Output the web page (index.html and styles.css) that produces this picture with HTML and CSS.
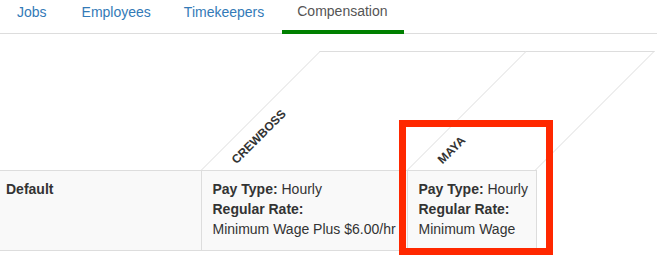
FILE: index.html
```html
<!DOCTYPE html>
<html>
<head>
<meta charset="utf-8">
<link rel="stylesheet" href="styles.css">
</head>
<body>
<ul class="tabs">
  <li class="first"><a href="#">Jobs</a></li>
  <li><a href="#">Employees</a></li>
  <li><a href="#">Timekeepers</a></li>
  <li class="active"><a href="#">Compensation</a></li>
</ul>
<table class="grid">
  <colgroup>
    <col class="c1">
    <col class="c2">
    <col class="c3">
  </colgroup>
  <thead>
    <tr>
      <th></th>
      <th><div class="head"><span class="label">CREWBOSS</span></div></th>
      <th><div class="head last"><span class="label">MAYA</span></div></th>
    </tr>
  </thead>
  <tbody>
    <tr>
      <td class="name">Default</td>
      <td><b>Pay Type:</b> Hourly<br><b>Regular Rate:</b><br>Minimum Wage Plus $6.00/hr</td>
      <td><b>Pay Type:</b> Hourly<br><b>Regular Rate:</b><br>Minimum Wage</td>
    </tr>
  </tbody>
</table>
<div class="highlight"></div>
</body>
</html>
```
FILE: styles.css
```css
html, body {
  margin: 0;
  padding: 0;
  background: #fff;
  font-family: "Liberation Sans", Arial, sans-serif;
  color: #333;
}

.tabs {
  display: flex;
  gap: 3px;
  list-style: none;
  margin: 0;
  padding: 0 0 0 2px;
  border-bottom: 1px solid #ddd;
}

.tabs .first {
  margin-right: 2px;
}

.tabs a {
  display: block;
  padding: 2px 15px 8px;
  line-height: 20px;
  font-size: 14px;
  color: #337ab7;
  text-decoration: none;
  border-bottom: 4px solid transparent;
  margin-bottom: -1px;
}

.tabs .active a {
  color: #555;
  padding: 1px 16px 9px 15px;
  border-bottom-color: #008000;
}

.grid {
  border-collapse: collapse;
  table-layout: fixed;
  width: 536px;
}

.c1 { width: 201px; }
.c2 { width: 206px; }
.c3 { width: 129px; }

.grid th {
  height: 136px;
  padding: 0;
  vertical-align: bottom;
  text-align: left;
}

.head {
  position: relative;
  height: 119px;
  box-sizing: border-box;
  display: flex;
  align-items: flex-end;
  padding: 0 0 4px 37px;
}

.head::before {
  content: "";
  position: absolute;
  inset: 0;
  border-top: 1px solid #ddd;
  border-left: 1px solid #ddd;
  transform: skewX(-45deg);
  transform-origin: 0 100%;
}

.head.last::before {
  border-right: 1px solid #ddd;
}

.label {
  display: inline-block;
  font-size: 12px;
  font-weight: bold;
  line-height: 12px;
  white-space: nowrap;
  color: #333;
  transform: rotate(-45deg);
  transform-origin: 0 100%;
}

.grid td {
  background: #f9f9f9;
  border: 1px solid #ddd;
  vertical-align: top;
  padding: 8px 11px 11px;
  font-size: 14px;
  line-height: 20px;
  color: #333;
  white-space: nowrap;
}

.grid td.name {
  border-left: none;
  padding-left: 6px;
  font-weight: bold;
}

.highlight {
  position: absolute;
  left: 399px;
  top: 120px;
  width: 154px;
  height: 135px;
  box-sizing: border-box;
  border: 7px solid #ff2800;
}
```
